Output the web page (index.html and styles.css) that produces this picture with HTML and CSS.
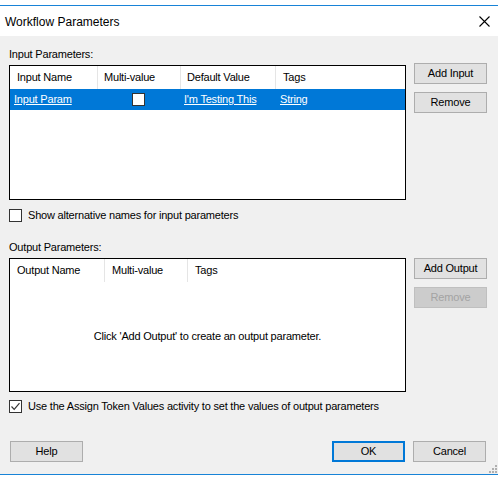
FILE: index.html
```html
<!DOCTYPE html>
<html>
<head>
<meta charset="utf-8">
<link rel="stylesheet" href="styles.css">
</head>
<body>
<div class="window">
  <div class="titlebar">
    <span class="title">Workflow Parameters</span>
    <svg class="close" width="11" height="11" viewBox="0 0 11 11"><path d="M0.5 0.5 L10.5 10.5 M10.5 0.5 L0.5 10.5" stroke="#000" stroke-width="1.1" fill="none"/></svg>
  </div>
  <div class="content">
    <div class="section">
      <div class="left">
        <div class="label">Input Parameters:</div>
        <div class="listbox">
          <div class="header">
            <div class="hcell in-c1">Input Name</div>
            <div class="hcell in-c2">Multi-value</div>
            <div class="hcell in-c3">Default Value</div>
            <div class="hcell in-c4 last">Tags</div>
          </div>
          <div class="row selected">
            <div class="cell in-c1 r1"><span class="link">Input Param</span></div>
            <div class="cell in-c2 center"><span class="cb white"></span></div>
            <div class="cell in-c3 r3"><span class="link">I'm Testing This</span></div>
            <div class="cell in-c4 r4"><span class="link">String</span></div>
          </div>
        </div>
      </div>
      <div class="buttons top15">
        <button class="btn">Add Input</button>
        <button class="btn">Remove</button>
      </div>
    </div>
    <div class="check check1">
      <span class="cb"></span>
      <span class="ctext">Show alternative names for input parameters</span>
    </div>
    <div class="section out">
      <div class="left">
        <div class="label">Output Parameters:</div>
        <div class="listbox outbox">
          <div class="header">
            <div class="hcell out-c1">Output Name</div>
            <div class="hcell out-c2">Multi-value</div>
            <div class="hcell out-c3 last">Tags</div>
          </div>
          <div class="empty">Click 'Add Output' to create an output parameter.</div>
        </div>
      </div>
      <div class="buttons top17">
        <button class="btn">Add Output</button>
        <button class="btn disabled">Remove</button>
      </div>
    </div>
    <div class="check check2">
      <span class="cb checked"><svg width="11" height="11" viewBox="0 0 11 11"><path d="M1.5 5.5 L4.2 8.3 L9.5 2.2" stroke="#333" stroke-width="1.2" fill="none"/></svg></span>
      <span class="ctext">Use the Assign Token Values activity to set the values of output parameters</span>
    </div>
    <div class="footer">
      <button class="btn help">Help</button>
      <div class="rightbtns">
        <button class="btn default">OK</button>
        <button class="btn">Cancel</button>
      </div>
    </div>
  </div>
  <svg class="grip" width="8" height="8" viewBox="0 0 8 8">
    <rect x="6" y="0" width="2" height="2" fill="#b0b0b0"/>
    <rect x="3" y="3" width="2" height="2" fill="#b0b0b0"/>
    <rect x="6" y="3" width="2" height="2" fill="#b0b0b0"/>
    <rect x="0" y="6" width="2" height="2" fill="#b0b0b0"/>
    <rect x="3" y="6" width="2" height="2" fill="#b0b0b0"/>
    <rect x="6" y="6" width="2" height="2" fill="#b0b0b0"/>
  </svg>
</div>
</body>
</html>
```

FILE: styles.css
```css
* { box-sizing: border-box; }
html, body { margin: 0; padding: 0; background: #fff; }
body {
  width: 498px;
  height: 478px;
  font-family: "Liberation Sans", Arial, sans-serif;
  font-size: 11px;
  letter-spacing: -0.2px;
  color: #000;
  overflow: hidden;
}
.window {
  position: relative;
  margin-top: 5px;
  border-top: 1px solid #1883d7;
  width: 498px;
}
.titlebar {
  height: 30px;
  background: #fff;
  display: flex;
  align-items: center;
  justify-content: space-between;
  padding: 0 8px 0 5px;
}
.title {
  font-size: 12px;
  line-height: 14px;
  padding-top: 1px;
  letter-spacing: 0;
}
.close { display: block; margin-top: 1px; }
.content {
  background: #f0f0f0;
  height: 439px;
  border-bottom: 1px solid #1883d7;
  padding: 12px 11px 0 9px;
}
.section {
  display: flex;
  gap: 8px;
}
.left { width: 398px; }
.label {
  line-height: 13px;
  height: 13px;
  margin-bottom: 4px;
}
.listbox {
  height: 135px;
  border: 1px solid #000;
  background: #fff;
}
.outbox { height: 134px; display: flex; flex-direction: column; }
.header {
  display: flex;
  height: 23px;
}
.hcell {
  line-height: 23px;
  padding-left: 7px;
  border-right: 1px solid #e5e5e5;
  white-space: nowrap;
}
.hcell.last { border-right: none; }
.in-c1 { width: 88px; }
.in-c2 { width: 83px; padding-left: 6px; }
.in-c3 { width: 95px; padding-left: 6px; }
.in-c4 { flex: 1; }
.out-c1 { width: 95px; }
.out-c2 { width: 83px; }
.out-c3 { flex: 1; }
.row {
  display: flex;
  height: 21px;
}
.row.selected { background: #0078d7; color: #fff; }
.cell {
  line-height: 21px;
  white-space: nowrap;
  border-right: 1px solid transparent;
}
.cell.r1 { padding-left: 4px; }
.cell.r3 { padding-left: 3px; }
.cell.r4 { padding-left: 4px; }
.cell.center { display: flex; align-items: center; justify-content: center; padding-left: 0; padding-right: 2px; }
.link { text-decoration: underline; }
.cb {
  display: inline-block;
  width: 13px;
  height: 13px;
  border: 1px solid #333;
  background: #fff;
  flex: none;
}
.cb.checked { display: flex; align-items: center; justify-content: center; }
.cb.checked svg { display: block; }
.buttons {
  width: 73px;
  display: flex;
  flex-direction: column;
  gap: 8px;
}
.top15 { padding-top: 15px; }
.top17 { padding-top: 17px; }
.btn {
  width: 73px;
  height: 21px;
  background: #e1e1e1;
  border: 1px solid #adadad;
  font-family: "Liberation Sans", Arial, sans-serif;
  font-size: 11px;
  letter-spacing: -0.2px;
  color: #000;
  padding: 0;
  margin: 0;
  line-height: 19px;
}
.btn.disabled {
  background: #cccccc;
  border-color: #bfbfbf;
  color: #a3a3a3;
}
.btn.default {
  border: 2px solid #0078d7;
  line-height: 17px;
}
.check {
  display: flex;
  align-items: center;
  gap: 6px;
  height: 13px;
}
.ctext { line-height: 13px; white-space: nowrap; }
.check1 { margin-top: 9px; }
.out { margin-top: 19px; }
.check2 { margin-top: 8px; }
.empty {
  flex: 1;
  display: flex;
  align-items: center;
  justify-content: center;
  padding-bottom: 2px;
}
.footer {
  margin-top: 28px;
  display: flex;
  justify-content: space-between;
}
.help { margin-left: 1px; }
.rightbtns { display: flex; gap: 8px; margin-right: 1px; }
.grip {
  position: absolute;
  right: 1px;
  bottom: 2px;
}
```
